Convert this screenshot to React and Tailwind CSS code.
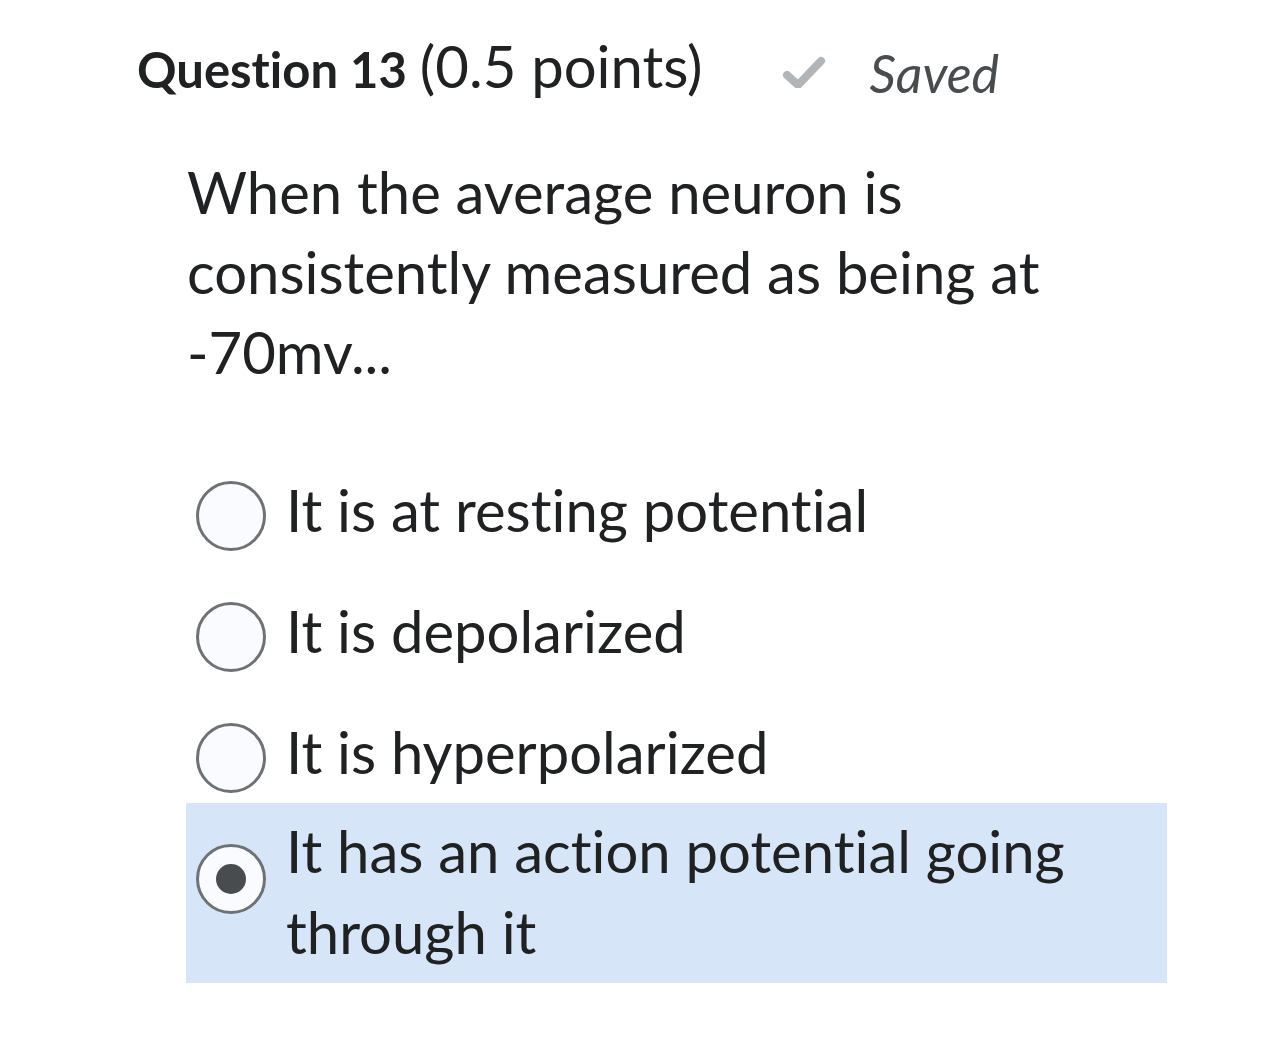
import React from 'react';

const options = [
    { id: 'a', text: 'It is at resting potential' },
    { id: 'b', text: 'It is depolarized' },
    { id: 'c', text: 'It is hyperpolarized' },
    { id: 'd', text: 'It has an action potential going through it' },
];

const Radio = ({ checked }) => (
    <span className="flex h-[70px] w-[70px] shrink-0 items-center justify-center rounded-full border-[3px] border-[#6f7275] bg-[#f9fbff]">
        {checked && <span className="h-[30px] w-[30px] rounded-full bg-[#494c4e]" />}
    </span>
);

const App = () => {
    const selected = 'd';

    return (
        <div className="min-h-[1046px] w-[1284px] bg-white pt-[37px] text-[#202122] [font-variant-ligatures:none]" style={{ fontFamily: 'Lato, "Noto Sans", sans-serif' }}>
            {/* header */}
            <div className="ml-[137px] flex items-baseline leading-none">
                <span className="text-[49px] font-bold">Question 13</span>
                <span className="ml-[13px] text-[58px]">(0.5 points)</span>
                <svg className="ml-[76px]" width="48" height="40" viewBox="0 0 48 40" fill="none">
                    <path d="M8 27 L19 37 L42 13" stroke="#b1b5b8" strokeWidth="8" strokeLinecap="round" strokeLinejoin="round" />
                </svg>
                <span className="relative top-[5px] ml-[43px] text-[52px] italic text-[#494c4e]">Saved</span>
            </div>

            {/* question */}
            <p className="ml-[187px] mt-[57px] w-[900px] text-[58px] leading-[80px]">
                When the average neuron is consistently measured as being at -70mv...
            </p>

            {/* answers */}
            <div className="ml-[186px] mt-[78px] w-[981px]">
                {options.map((opt, i) => {
                    const isSel = opt.id === selected;
                    if (isSel) {
                        return (
                            <div key={opt.id} className="mt-[10px] flex items-start bg-[#d6e5f7] pl-[10px] pr-[10px] pt-[7px] pb-[11px]">
                                <span className="mt-[34px]"><Radio checked /></span>
                                <span className="ml-[20px] text-[58px] leading-[81px]">{opt.text}</span>
                            </div>
                        );
                    }
                    return (
                        <div key={opt.id} className={`flex items-start pl-[10px] ${i > 0 ? 'mt-[40px]' : ''}`}>
                            <span className="mt-[11px]"><Radio checked={false} /></span>
                            <span className="ml-[20px] text-[58px] leading-[80px]">{opt.text}</span>
                        </div>
                    );
                })}
            </div>
        </div>
    );
};

export default App;
